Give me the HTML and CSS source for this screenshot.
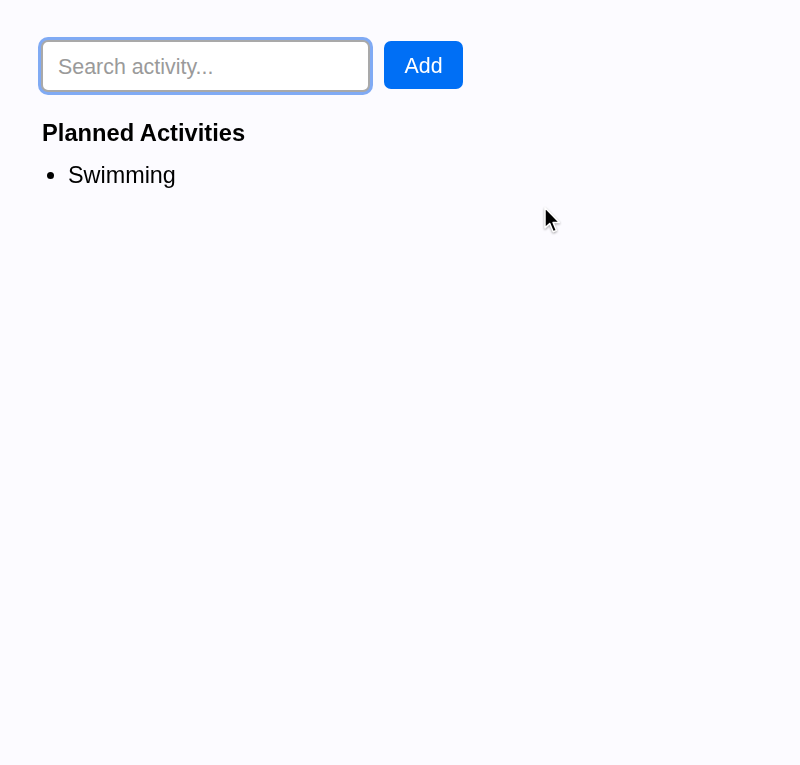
FILE: index.html
```html
<!DOCTYPE html>
<html lang="en">
<head>
<meta charset="utf-8">
<title>Planned Activities</title>
<link rel="stylesheet" href="styles.css">
</head>
<body>
<main class="app">
  <div class="search-row">
    <input class="search-input" type="text" placeholder="Search activity..." autofocus>
    <button class="add-btn" type="button">Add</button>
  </div>
  <h3 class="list-title">Planned Activities</h3>
  <ul class="activity-list">
    <li>Swimming</li>
  </ul>
</main>
<svg class="cursor" width="19" height="30" viewBox="0 0 16 26" aria-hidden="true">
  <path d="M1.5 1.5 L1.5 19 L5.6 15.2 L8.6 22.3 L11.4 21.1 L8.5 14.2 L14 14.2 Z" fill="#000" stroke="#fff" stroke-width="1.3" stroke-linejoin="round"/>
</svg>
</body>
</html>
```
FILE: styles.css
```css
html, body {
  margin: 0;
  padding: 0;
  background: #fcfbff;
}

body {
  font-family: "Liberation Sans", Arial, Helvetica, sans-serif;
  color: #000;
  min-height: 765px;
  position: relative;
}

.app {
  padding: 40px 41px;
}

.search-row {
  display: flex;
  align-items: center;
  gap: 14px;
}

.search-input {
  box-sizing: border-box;
  width: 329px;
  height: 52px;
  padding: 2px 15px 0;
  font-family: "Liberation Sans", Arial, Helvetica, sans-serif;
  font-size: 21.4px;
  color: #000;
  background: #fff;
  border: 2px solid #a9a9a9;
  border-radius: 7px;
  outline: none;
  box-shadow: 0 0 0 3px #80aaf4;
  caret-color: #1a66e8;
}

.search-input::placeholder {
  color: #9a9a9a;
}

.add-btn {
  box-sizing: border-box;
  width: 79px;
  height: 48px;
  margin-top: -2px;
  padding: 3px 0 0;
  border: none;
  border-radius: 7px;
  background: #006ff5;
  color: #fff;
  font-family: "Liberation Sans", Arial, Helvetica, sans-serif;
  font-size: 21.4px;
}

.list-title {
  margin: 28px 0 15px 1px;
  font-size: 23.7px;
  font-weight: bold;
}

.activity-list {
  margin: 0;
  padding-left: 27px;
  font-size: 23.4px;
}

.cursor {
  position: absolute;
  left: 543px;
  top: 206px;
  filter: drop-shadow(0 1px 1px rgba(0, 0, 0, 0.35));
}
```
